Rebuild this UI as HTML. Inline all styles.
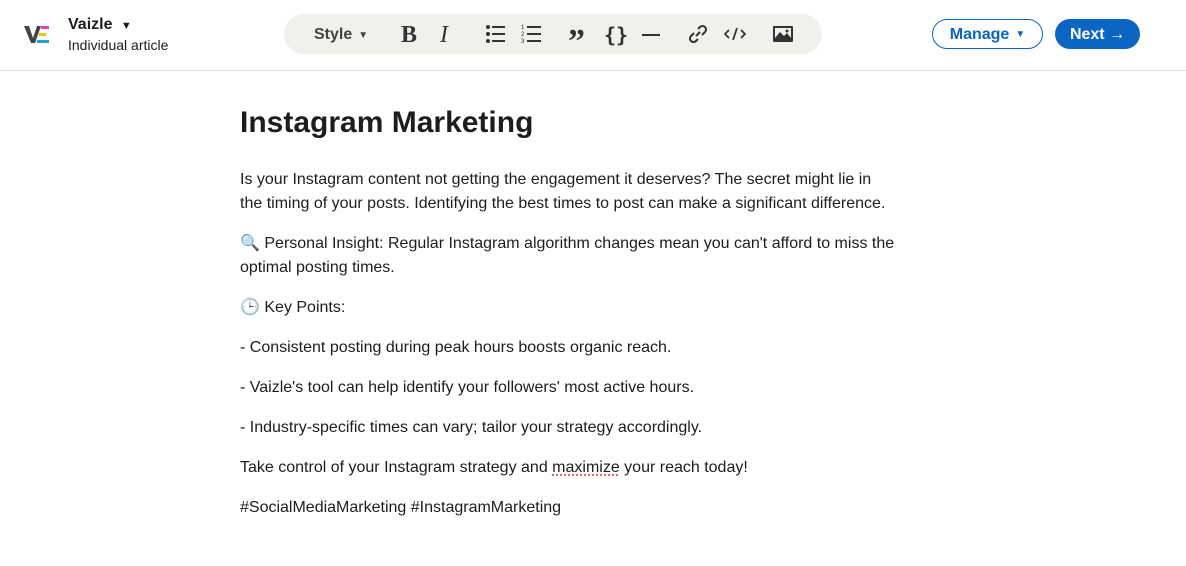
<!DOCTYPE html>
<html><head><meta charset="utf-8"><style>
body{margin:0;width:1186px;height:566px;background:#fff;font-family:"Liberation Sans",sans-serif;color:#1d1d1d;position:relative;overflow:hidden}
.hdr{position:absolute;left:0;top:0;width:1186px;height:70px;border-bottom:1px solid #e3e3e3}
.abs{position:absolute}
.tb{left:284px;top:14px;width:538px;height:40px;background:#f1f0ed;border-radius:20px}
.ic{position:absolute;top:1px;height:40px;display:flex;align-items:center;justify-content:center;color:#333}
.btn{top:19px;height:30px;border-radius:15px;font-size:16px;font-weight:bold;display:flex;align-items:center;justify-content:center;box-sizing:border-box;padding-top:1px}
.c{position:absolute;left:240px;top:101px;width:720px;font-size:16px;line-height:24px;white-space:nowrap}
.c h1{font-size:30px;margin:0 0 23px;line-height:44px}
.c p{margin:0 0 16px}
</style></head><body>
<div class="hdr"></div>
<svg class="abs" style="left:24px;top:25px" width="26" height="20" viewBox="0 0 26 20">
<path d="M0 1 L5 1 L9 13 L13 1 L17 1 L11 18 L7 18 Z" fill="#444"/>
<rect x="17" y="1" width="8" height="3" fill="#e040c8"/>
<rect x="15" y="8" width="7" height="3" fill="#f5c400"/>
<rect x="13" y="15" width="12" height="3" fill="#1ea0e0"/>
</svg>
<div class="abs" style="left:68px;top:16px;font-size:16px;font-weight:bold">Vaizle <span style="font-size:11px;margin-left:4px">▼</span></div>
<div class="abs" style="left:68px;top:37px;font-size:14px">Individual article</div>
<div class="abs tb">
<div class="ic" style="left:30px;font-size:16px;font-weight:bold;color:#444">Style <span style="font-size:10px;margin-left:6px">▼</span></div>
<div class="ic" style="left:117px;font-family:'Liberation Serif',serif;font-size:24px;font-weight:bold">B</div>
<div class="ic" style="left:156px;font-family:'Liberation Serif',serif;font-size:24px;font-style:italic">I</div>
<svg class="abs" style="left:201px;top:10px" width="20" height="20"><g fill="#333"><circle cx="3" cy="3" r="2"/><circle cx="3" cy="10" r="2"/><circle cx="3" cy="17" r="2"/><rect x="7" y="2" width="13" height="2"/><rect x="7" y="9" width="13" height="2"/><rect x="7" y="16" width="13" height="2"/></g></svg>
<svg class="abs" style="left:237px;top:10px" width="20" height="20"><g fill="#333" font-size="6" font-family="Liberation Sans"><text x="0" y="5">1</text><text x="0" y="12">2</text><text x="0" y="19">3</text><rect x="6" y="2" width="14" height="2"/><rect x="6" y="9" width="14" height="2"/><rect x="6" y="16" width="14" height="2"/></g></svg>
<div class="ic" style="left:284px;font-family:'Liberation Serif',serif;font-size:34px;font-weight:bold;top:8px">”</div>
<div class="ic" style="left:320px;font-size:20px;font-family:'DejaVu Sans Mono',monospace;font-weight:bold">{}</div>
<div class="abs" style="left:358px;top:20px;width:18px;height:2px;background:#333"></div>
<svg class="abs" style="left:404px;top:10px" width="20" height="20" fill="none" stroke="#333" stroke-width="2"><path d="M8 12 L12 8"/><path d="M10 5 L12 3 A3.5 3.5 0 0 1 17 8 L14 11"/><path d="M10 15 L8 17 A3.5 3.5 0 0 1 3 12 L6 9"/></svg>
<svg class="abs" style="left:440px;top:10px" width="22" height="20" fill="none" stroke="#333" stroke-width="1.8"><path d="M5 6 L1 10 L5 14 M17 6 L21 10 L17 14 M13 4 L9 16"/></svg>
<svg class="abs" style="left:489px;top:11px" width="20" height="18"><rect x="0" y="1" width="20" height="16" fill="#333" rx="1"/><rect x="2" y="3" width="16" height="10" fill="#f1f0ed"/><path d="M2 13 L7 7 L11 11 L14 8 L18 13 Z" fill="#333"/><circle cx="14" cy="6" r="1.5" fill="#333"/></svg>
</div>
<div class="abs btn" style="left:932px;width:111px;border:1.5px solid #0a66c2;color:#0a66c2">Manage <span style="font-size:10px;margin-left:6px">▼</span></div>
<div class="abs btn" style="left:1055px;width:85px;background:#0a66c2;color:#fff">Next →</div>
<div class="c">
<h1>Instagram Marketing</h1>
<p>Is your Instagram content not getting the engagement it deserves? The secret might lie in<br>the timing of your posts. Identifying the best times to post can make a significant difference.</p>
<p>🔍 Personal Insight: Regular Instagram algorithm changes mean you can't afford to miss the<br>optimal posting times.</p>
<p>🕒 Key Points:</p>
<p>- Consistent posting during peak hours boosts organic reach.</p>
<p>- Vaizle's tool can help identify your followers' most active hours.</p>
<p>- Industry-specific times can vary; tailor your strategy accordingly.</p>
<p>Take control of your Instagram strategy and <span style="text-decoration:underline dotted #d33;text-underline-offset:3px">maximize</span> your reach today!</p>
<p>#SocialMediaMarketing #InstagramMarketing</p>
</div>
</body></html>
